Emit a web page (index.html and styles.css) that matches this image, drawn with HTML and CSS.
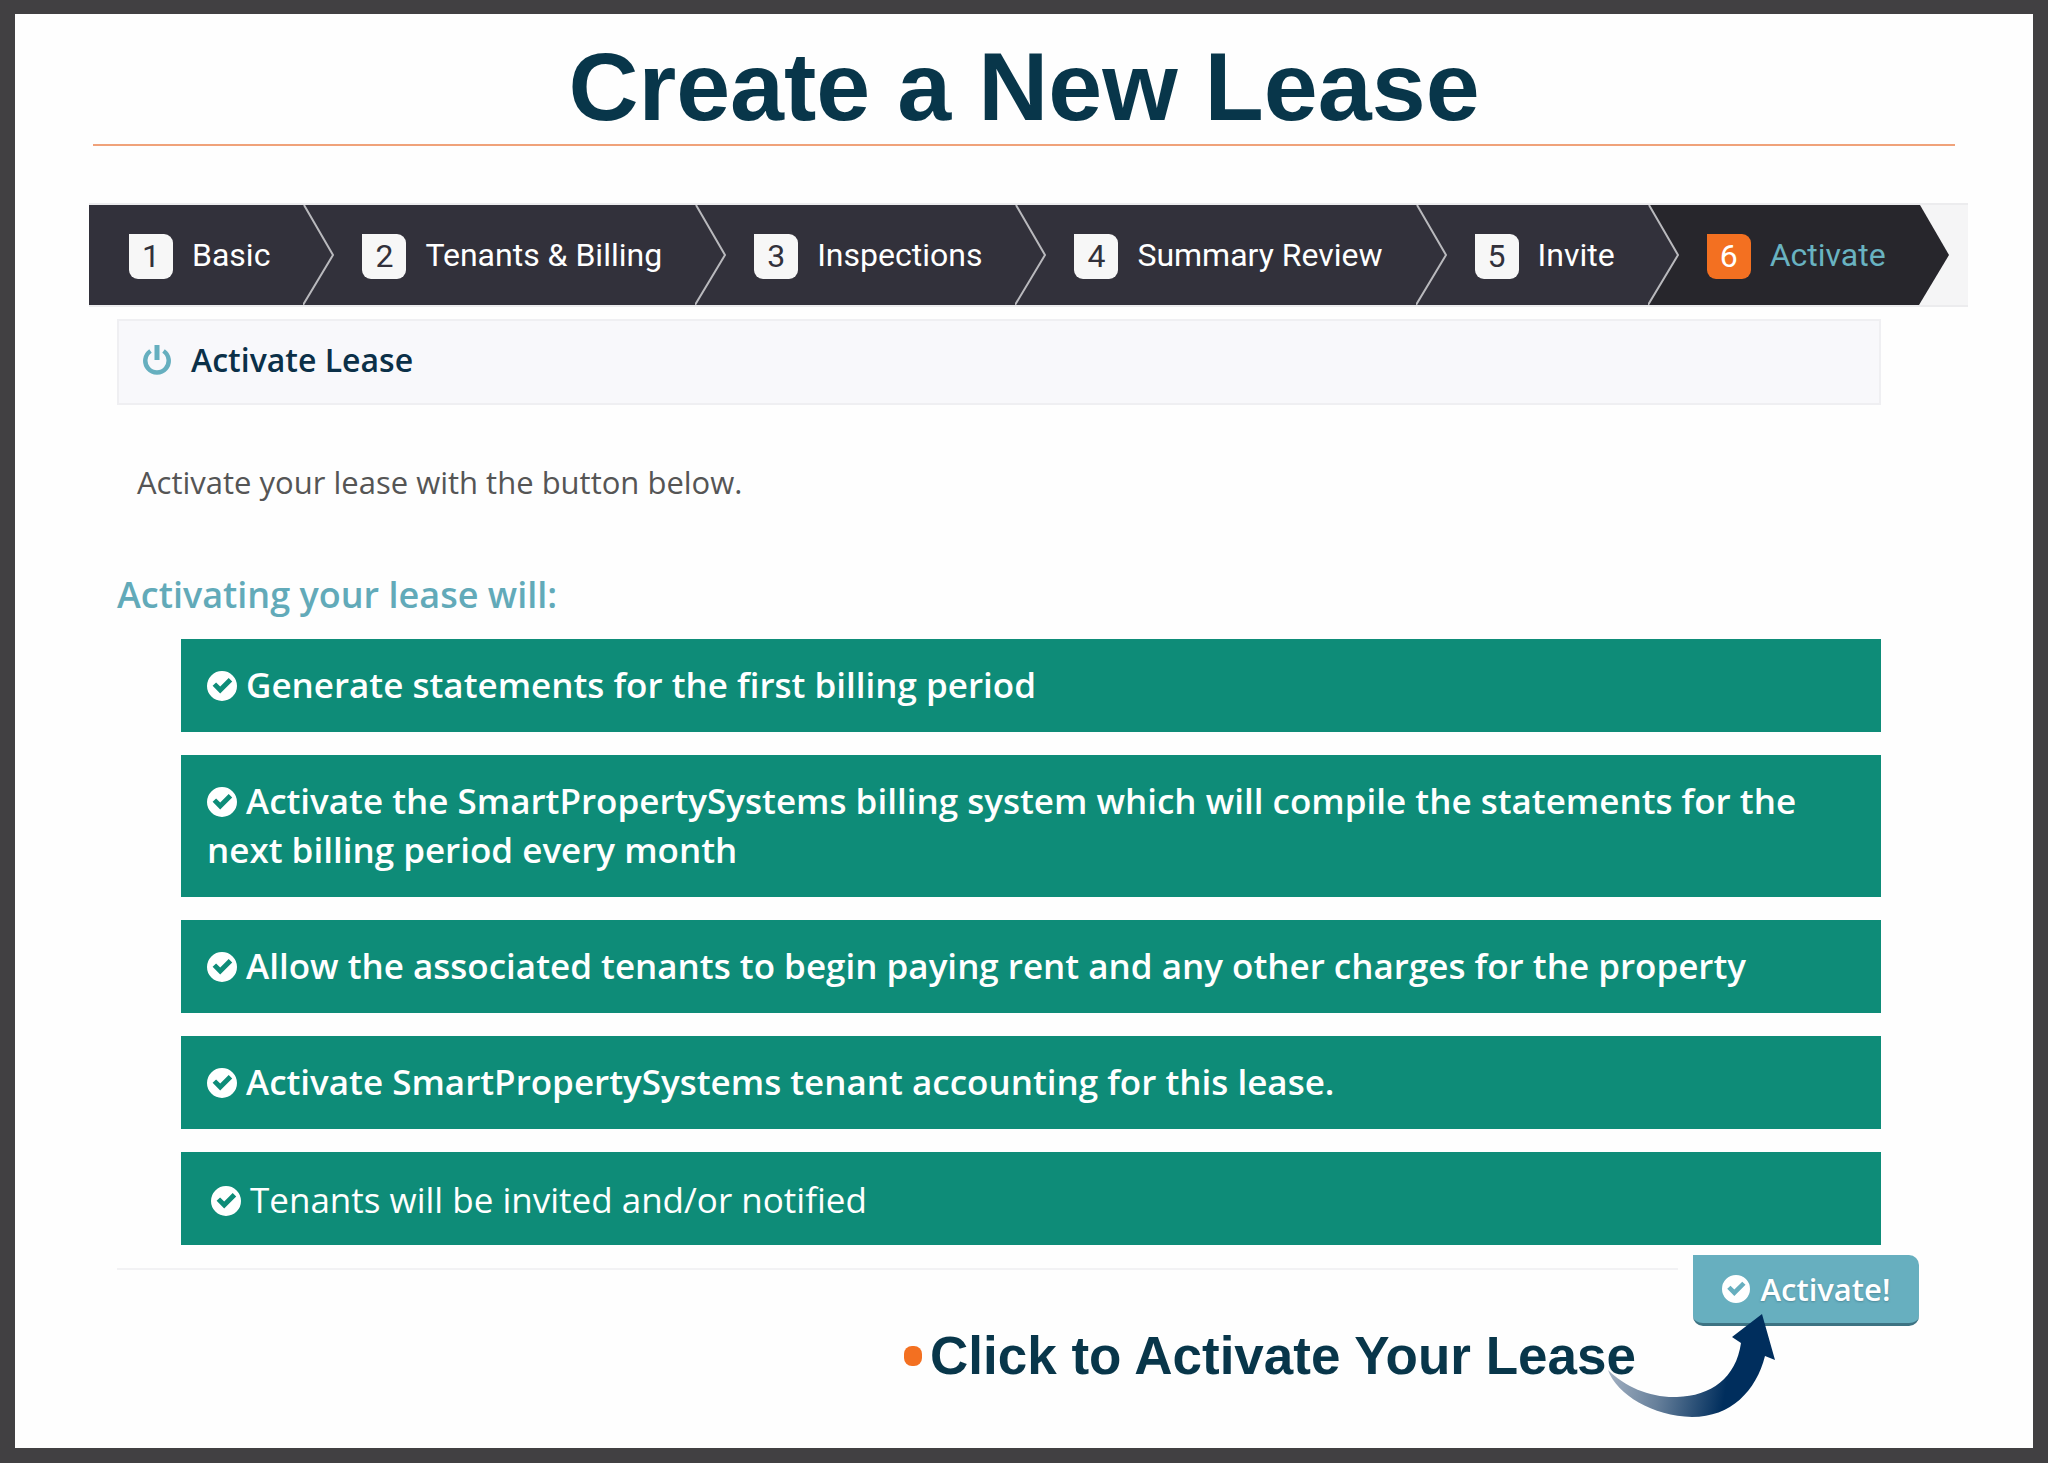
FILE: index.html
```html
<!DOCTYPE html>
<html lang="en">
<head>
  <meta charset="utf-8">
  <meta name="viewport" content="width=device-width, initial-scale=1">
  <title>Create a New Lease</title>
  <link rel="stylesheet" href="styles.css">
</head>
<body>
  <svg class="sprite" aria-hidden="true">
    <symbol id="check" viewBox="0 0 30 30">
      <path fill-rule="evenodd" d="M15 0a15 15 0 1 1 0 30a15 15 0 0 1 0-30zM5.600 14.800l7.600 7.700l12-12l-3.500-3.400l-8.500 8.500l-4.100-4.200z"/>
    </symbol>
    <symbol id="chevron" viewBox="0 0 32 100" preserveAspectRatio="none">
      <path class="chevron-fill" d="M0 0H1L30 50L0 100z"/>
      <path class="chevron-line" d="M1 0L30 50L0 100"/>
    </symbol>
  </svg>

  <main class="slide">
    <h1 class="title">Create a New Lease</h1>

    <ol class="steps">
      <li class="step"><span class="step-number">1</span><span>Basic</span><svg class="chevron"><use href="#chevron"/></svg></li>
      <li class="step"><span class="step-number">2</span><span>Tenants &amp; Billing</span><svg class="chevron"><use href="#chevron"/></svg></li>
      <li class="step"><span class="step-number">3</span><span>Inspections</span><svg class="chevron"><use href="#chevron"/></svg></li>
      <li class="step"><span class="step-number">4</span><span>Summary Review</span><svg class="chevron"><use href="#chevron"/></svg></li>
      <li class="step"><span class="step-number">5</span><span>Invite</span><svg class="chevron"><use href="#chevron"/></svg></li>
      <li class="step step-current" aria-current="step"><span class="step-number">6</span><span>Activate</span><svg class="chevron"><use href="#chevron"/></svg></li>
    </ol>

    <section class="content">
      <h2 class="panel-title">
        <svg class="power" viewBox="0 0 28 30" aria-hidden="true"><path d="M7.500 6A11.700 11.700 0 1 0 20.500 6" fill="none" stroke="currentColor" stroke-width="4.500"/><path d="M14 0V15" stroke="currentColor" stroke-width="5"/></svg>
        Activate Lease
      </h2>
      <p class="intro">Activate your lease with the button below.</p>
      <h3 class="list-title">Activating your lease will:</h3>
      <ul class="effects">
        <li class="effect"><svg class="check"><use href="#check"/></svg>Generate statements for the first billing period</li>
        <li class="effect"><svg class="check"><use href="#check"/></svg>Activate the SmartPropertySystems billing system which will compile the statements for the next billing period every month</li>
        <li class="effect"><svg class="check"><use href="#check"/></svg>Allow the associated tenants to begin paying rent and any other charges for the property</li>
        <li class="effect"><svg class="check"><use href="#check"/></svg>Activate SmartPropertySystems tenant accounting for this lease.</li>
        <li class="effect effect-added"><svg class="check"><use href="#check"/></svg>Tenants will be invited and/or notified</li>
      </ul>
    </section>

    <div class="actions">
      <hr class="rule">
      <button class="activate" type="button"><svg class="check"><use href="#check"/></svg>Activate!</button>
    </div>

    <p class="cue">
      <span class="bullet"></span>Click to Activate Your Lease
      <svg class="arrow" viewBox="0 0 170 106" aria-hidden="true">
        <defs>
          <linearGradient id="fade" gradientUnits="userSpaceOnUse" x1="0" y1="60" x2="118" y2="80">
            <stop offset="0" stop-color="#a3b1c2"/>
            <stop offset=".45" stop-color="#67809b"/>
            <stop offset="1" stop-color="#002e5d"/>
          </linearGradient>
        </defs>
        <path fill="url(#fade)" d="M1 57C18 74 44 85 70 84C104 83 129 65 134 30L125 24L155 1L168 47L158 43C149 78 124 104 85 104C46 103 10 82 1 57z"/>
      </svg>
    </p>
  </main>
</body>
</html>
```
FILE: styles.css
```css
* {
  box-sizing: border-box;
}

body {
  display: flex;
  min-height: 100vh;
  margin: 0;
  padding: 14px 15px 15px;
  background: #414042;
  font-family: "Open Sans", "Noto Sans", sans-serif;
}

h1, h2, h3, p, ol, ul {
  margin: 0;
  padding: 0;
  font-weight: 600;
}

ol, ul {
  list-style: none;
}

.sprite {
  position: absolute;
  width: 0;
  height: 0;
}

.slide {
  flex: 1;
  padding: 18px 65px 30px 74px;
  background: #fefefe;
}

.title {
  margin: 0 13px 0 4px;
  padding-bottom: 2px;
  border-bottom: 2px solid #f0a27a;
  color: #08364a;
  font: bold 97px/110px "Liberation Sans", Arial, sans-serif;
  text-align: center;
}

/* Progress steps */

.steps {
  display: flex;
  margin-top: 57px;
  border: solid #ececee;
  border-width: 2px 0;
  background: #f5f5f6;
  color: #fff;
  font: 32px/38px Roboto, sans-serif;
}

.step {
  position: relative;
  display: flex;
  align-items: center;
  gap: 19px;
  height: 100px;
  padding: 0 33px 0 59px;
  background: #32313b;
  white-space: nowrap;
}

.step:first-child {
  padding-left: 40px;
}

.step-number {
  width: 44px;
  height: 45px;
  margin-top: 3px;
  border-radius: 0 9px 9px 9px;
  background: #f7f7f7;
  color: #32313b;
  line-height: 45px;
  text-align: center;
}

.chevron {
  position: absolute;
  z-index: 1;
  top: 0;
  left: 100%;
  width: 32px;
  height: 100px;
  fill: #32313b;
  stroke: #b9b9bd;
}

.chevron-fill {
  stroke: none;
}

.chevron-line {
  fill: none;
  stroke-width: 2px;
}

.step-current {
  background: #27262c;
  color: #69b3c1;
}

.step-current .step-number {
  background: #f37021;
  color: #fff;
}

.step-current .chevron {
  fill: #27262c;
  stroke: none;
}

/* Lease panel */

.content {
  margin: 12px 87px 0 28px;
}

.panel-title {
  display: flex;
  align-items: center;
  gap: 20px;
  height: 86px;
  padding: 0 24px 4px;
  border: 2px solid #efeff2;
  background: #f8f8fb;
  color: #0b3048;
  font-size: 32px;
  line-height: 44px;
}

.power {
  width: 28px;
  height: 30px;
  color: #66afbf;
}

.intro {
  margin-top: 55px;
  padding-left: 20px;
  color: #555;
  font-size: 31px;
  font-weight: 400;
  line-height: 44px;
}

.list-title {
  margin-top: 65px;
  color: #62aab9;
  font-size: 36px;
  line-height: 52px;
}

.effects {
  display: grid;
  gap: 23px;
  margin: 18px 0 0 64px;
}

.effect {
  padding: 21px 60px 23px 26px;
  background: #0e8c78;
  color: #fff;
  font-size: 35px;
  font-weight: 600;
  line-height: 49px;
}

.effect-added {
  padding: 23px 60px 21px 30px;
  font-weight: 400;
}

.check {
  width: 30px;
  height: 30px;
  fill: currentColor;
}

.effect .check {
  margin-right: 9px;
  vertical-align: -3px;
}

/* Submit row */

.actions {
  display: flex;
  align-items: flex-start;
  gap: 15px;
  margin: 10px 49px 0 28px;
}

.rule {
  flex: 1;
  margin: 13px 0 0;
  border: 0;
  border-top: 2px solid #f2f2f4;
}

.activate {
  display: flex;
  align-items: center;
  justify-content: center;
  gap: 11px;
  width: 226px;
  height: 71px;
  border: 0;
  border-bottom: 3px solid #3d7383;
  border-radius: 0 10px 10px 10px;
  background: #67afbf;
  color: #fff;
  font: 600 31px/40px "Open Sans", "Noto Sans", sans-serif;
  text-shadow: 0 1px 2px #3d738399;
}

.activate .check {
  width: 28px;
  height: 28px;
}

.cue {
  position: relative;
  display: flex;
  align-items: center;
  justify-content: flex-end;
  gap: 8px;
  padding-right: 332px;
  color: #08364a;
  font: bold 53px/60px "Liberation Sans", Arial, sans-serif;
}

.bullet {
  width: 18px;
  height: 20px;
  border-radius: 8px;
  background: #f37021;
}

.arrow {
  position: absolute;
  top: -13px;
  right: 191px;
  width: 170px;
  height: 106px;
}
```
